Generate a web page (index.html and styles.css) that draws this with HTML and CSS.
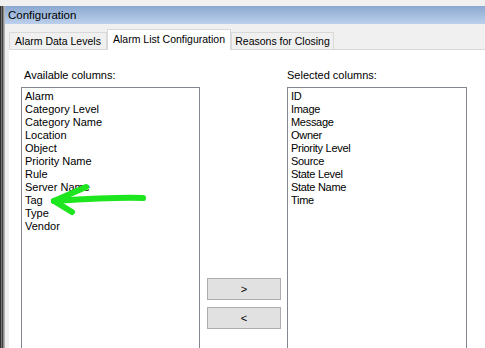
FILE: index.html
```html
<!DOCTYPE html>
<html>
<head>
<meta charset="utf-8">
<link rel="stylesheet" href="styles.css">
</head>
<body>
<div class="top-gap"></div>
<div class="window">
  <div class="edge"></div>
  <div class="main">
    <div class="titlebar">Configuration</div>
    <div class="content">
      <div class="tabs">
        <div class="tab tab-1">Alarm Data Levels</div>
        <div class="tab tab-2 active">Alarm List Configuration</div>
        <div class="tab tab-3">Reasons for Closing</div>
      </div>
      <div class="panel">
        <div class="grid">
          <div class="label label-left">Available columns:</div>
          <div class="spacer"></div>
          <div class="label label-right">Selected columns:</div>
          <ul class="list list-left">
            <li>Alarm</li>
            <li>Category Level</li>
            <li>Category Name</li>
            <li>Location</li>
            <li>Object</li>
            <li>Priority Name</li>
            <li>Rule</li>
            <li>Server Name</li>
            <li>Tag</li>
            <li>Type</li>
            <li>Vendor</li>
          </ul>
          <div class="buttons">
            <button class="btn">&gt;</button>
            <button class="btn">&lt;</button>
          </div>
          <ul class="list list-right">
            <li>ID</li>
            <li>Image</li>
            <li>Message</li>
            <li>Owner</li>
            <li>Priority Level</li>
            <li>Source</li>
            <li>State Level</li>
            <li>State Name</li>
            <li>Time</li>
          </ul>
        </div>
      </div>
    </div>
  </div>
</div>
<svg class="arrow" width="485" height="348" viewBox="0 0 485 348">
  <path d="M143 198 C120 197 85 199 54 201" />
  <path d="M54 201 L86 187" />
  <path d="M54 201 L72 212" />
</svg>
</body>
</html>
```

FILE: styles.css
```css
html, body {
  margin: 0;
  padding: 0;
}
body {
  width: 485px;
  height: 348px;
  overflow: hidden;
  background: #f0f0f0;
  font-family: "Liberation Sans", Arial, sans-serif;
  font-size: 11px;
  color: #000;
  position: relative;
}
.top-gap {
  height: 6px;
}
.window {
  display: flex;
  height: 342px;
  overflow: hidden;
}
.edge {
  width: 5px;
  flex: none;
  background: linear-gradient(to right, #2f2f2f 0 1px, #767676 1px 2px, #3e3e3e 2px 3px, #8c8c8c 3px 4px, #b5b5b5 4px 5px);
}
.main {
  flex: 1;
  display: flex;
  flex-direction: column;
  min-width: 0;
}
.titlebar {
  height: 18px;
  line-height: 18px;
  padding-left: 3px;
  font-size: 11.5px;
  background: linear-gradient(to bottom, #8ba8d0, #bcd0ec);
}
.content {
  flex: 1;
  display: flex;
  flex-direction: column;
  padding-left: 4px;
  padding-top: 5px;
}
.tabs {
  display: flex;
  align-items: flex-end;
  height: 20px;
  position: relative;
  z-index: 1;
}
.tab {
  box-sizing: border-box;
  height: 17px;
  line-height: 16px;
  text-align: center;
  border: 1px solid #d9d9d9;
  border-bottom: none;
  background: #f0f0f0;
  font-size: 10.5px;
  white-space: nowrap;
}
.tab-1 {
  width: 98px;
}
.tab-2 {
  width: 124px;
}
.tab-3 {
  width: 103px;
}
.tab.active {
  height: 21px;
  line-height: 18px;
  margin-bottom: -1px;
  background: #fff;
}
.panel {
  flex: 1;
  min-height: 0;
  background: #fff;
  border-top: 1px solid #d9d9d9;
  padding: 19px 0 0 12px;
}
.grid {
  display: grid;
  grid-template-columns: 179px 87px 180px;
  grid-template-rows: 13px auto;
  row-gap: 5px;
}
.label {
  line-height: 13px;
  white-space: nowrap;
}
.label-left {
  padding-left: 3px;
}
.list {
  list-style: none;
  margin: 0;
  padding: 2px 0 0 3px;
  height: 262px;
  border: 1px solid #828790;
  box-sizing: border-box;
}
.list li {
  line-height: 13px;
  height: 13px;
  white-space: nowrap;
}
.list-right {
  letter-spacing: -0.3px;
}
.buttons {
  display: flex;
  flex-direction: column;
  align-items: flex-start;
  gap: 7px;
  padding: 191px 0 0 7px;
}
.btn {
  margin: 0;
  height: 22px;
  width: 74px;
  background: #e1e1e1;
  border: 1px solid #adadad;
  font-family: "Liberation Sans", Arial, sans-serif;
  font-size: 11px;
  color: #000;
  padding: 0;
}
.arrow {
  position: absolute;
  left: 0;
  top: 0;
  pointer-events: none;
}
.arrow path {
  fill: none;
  stroke: #1ee61e;
  stroke-width: 6;
  stroke-linecap: round;
  stroke-linejoin: round;
}
```
